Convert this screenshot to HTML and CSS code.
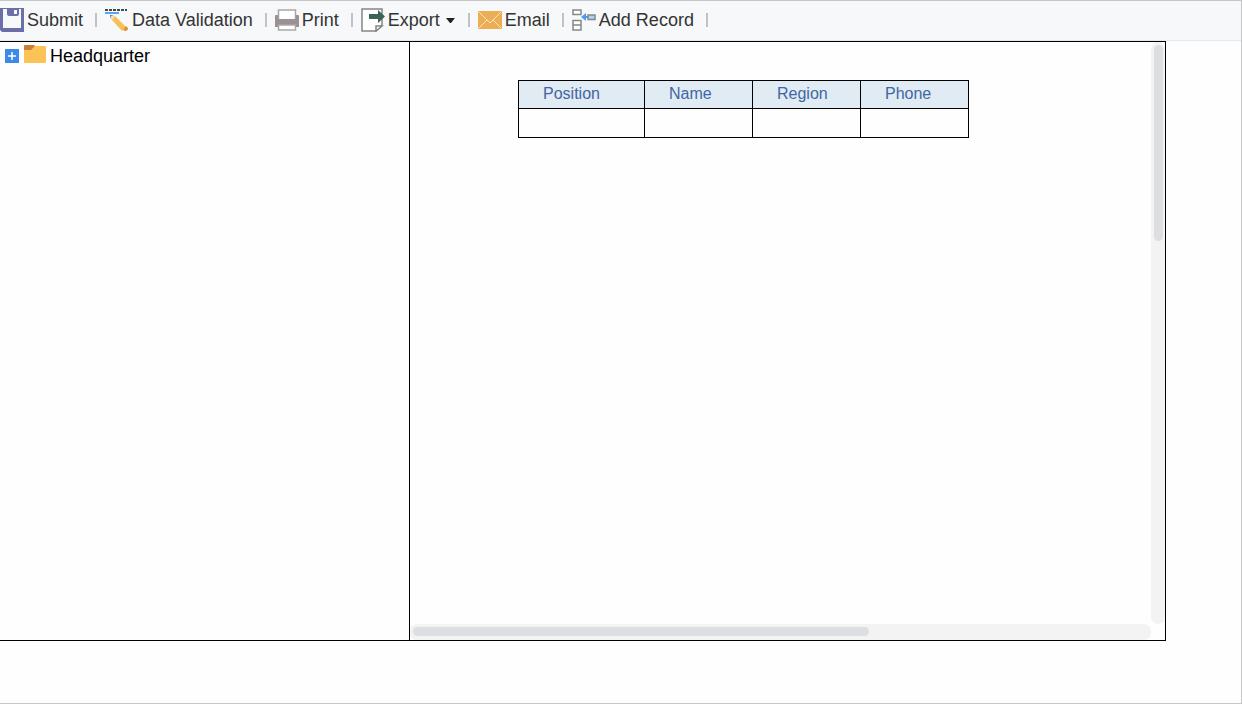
FILE: index.html
```html
<!DOCTYPE html>
<html lang="en">
    <head>
        <meta charset="UTF-8">
        <title>Headquarter</title>
        <link rel="stylesheet" href="styles.css">
    </head>
    <body>
        <div class="page">
            <div class="toolbar">
                <button type="button" class="tool">
                    <svg class="icon" viewBox="0 0 24 24">
                        <path fill="#6c6ea9" d="M0 0h24v24H2l-2-2z"/>
                        <path fill="#f6f8fa" d="M3 1h18v19H3z"/>
                        <path fill="#6c6ea9" d="M7 0h12v6q0 2-2 2H9q-2 0-2-2z"/>
                        <path fill="#f6f8fa" d="M14 2h3v4h-3z"/>
                    </svg>
                    Submit
                </button>
                <span class="separator"></span>
                <button type="button" class="tool">
                    <svg class="icon" viewBox="0 0 24 24">
                        <path stroke="#3f4a58" stroke-width="2" stroke-dasharray="3 1" d="M0 2h22"/>
                        <path stroke="#58a6ee" stroke-width="2" d="M0 5h14"/>
                        <path fill="#4a4a4a" d="M5 7l4 1-3 3z"/>
                        <path fill="#f5dfb8" d="M6 8l4 0-3 4-1-2z"/>
                        <path fill="#f8c054" d="M10 8l11 11-4 4L7 12z"/>
                        <path fill="#d98f3d" d="M21 18l2 2q0 3-3 3l-2-1z"/>
                    </svg>
                    Data Validation
                </button>
                <span class="separator"></span>
                <button type="button" class="tool">
                    <svg class="icon" viewBox="0 0 24 24">
                        <path fill="#fff" stroke="#aaa6a6" stroke-width="1.5" d="M3.500 2h17v10h-17z"/>
                        <path fill="#999193" d="M0 8q0-1 1-1h2v4h18V7h2q1 0 1 1v11H0z"/>
                        <path fill="#fff" stroke="#aaa6a6" stroke-width="1.500" d="M3.500 17h17v5h-17z"/>
                    </svg>
                    Print
                </button>
                <span class="separator"></span>
                <button type="button" class="tool">
                    <svg class="icon" viewBox="0 0 24 24">
                        <path fill="#fff" stroke="#858585" stroke-width="1.500" d="M1 1h20v16l-6 6H1z"/>
                        <path fill="#fff" stroke="#858585" stroke-width="1.500" d="M15 23v-5h6z"/>
                        <path fill="#3e6257" d="M8 6h9V2l7 6.500-7 6.500v-4H8z"/>
                    </svg>
                    Export
                    <svg class="caret" viewBox="0 0 10 5"><path fill="#222" d="M0 0h9L5 5H4z"/></svg>
                </button>
                <span class="separator"></span>
                <button type="button" class="tool">
                    <svg class="icon" viewBox="0 0 24 24">
                        <rect y="3" width="24" height="18" rx="1" fill="#ecae55"/>
                        <path fill="none" stroke="#fbe6c4" d="M1 4l11 11L23 4M1 20l8-8M23 20l-8-8"/>
                    </svg>
                    Email
                </button>
                <span class="separator"></span>
                <button type="button" class="tool">
                    <svg class="icon" viewBox="0 0 24 24">
                        <path fill="#fff" stroke="#878787" stroke-width="1.500" d="M1 2h8v4.500H1zM1 12.500h8V17H1zM1 17h8v5H1z"/>
                        <path fill="#4b9af5" d="M9 9l5-4v3h3v2h-3v3z"/>
                        <path fill="#a9d4f5" stroke="#878787" stroke-width="1.500" d="M16 7h7v4.500h-7z"/>
                    </svg>
                    Add Record
                </button>
                <span class="separator"></span>
            </div>

            <div class="workspace">
                <div class="tree">
                    <button type="button" class="expand" aria-label="Expand">
                        <svg class="plus" viewBox="0 0 14 14">
                            <rect width="14" height="14" fill="#3b8ae8"/>
                            <path stroke="#fff" stroke-width="1.500" d="M3 7h8M7 3v8"/>
                        </svg>
                    </button>
                    <svg class="folder" viewBox="0 0 22 18">
                        <path fill="#c78036" d="M0 1q0-1 1-1h9l2 2v3H0z"/>
                        <path fill="#fac355" d="M0 5h7l4-4h10q1 0 1 1v15q0 1-1 1H1q-1 0-1-1z"/>
                    </svg>
                    <span>Headquarter</span>
                </div>

                <div class="viewer">
                    <div class="report">
                        <table class="staff">
                            <thead>
                                <tr>
                                    <th class="position">Position</th>
                                    <th>Name</th>
                                    <th>Region</th>
                                    <th>Phone</th>
                                </tr>
                            </thead>
                            <tbody>
                                <tr>
                                    <td></td>
                                    <td></td>
                                    <td></td>
                                    <td></td>
                                </tr>
                            </tbody>
                        </table>
                    </div>
                    <div class="scrollbar"><div class="thumb-y"></div></div>
                    <div class="scrollbar"><div class="thumb-x"></div></div>
                </div>
            </div>
        </div>
    </body>
</html>
```

FILE: styles.css
```css
* {
    box-sizing: border-box;
}
body {
    margin: 0;
    font-family: "Liberation Sans", Arial, sans-serif;
    font-size: 18px;
    color: #000;
    background: #fefefe;
}
.page {
    display: flex;
    flex-direction: column;
    min-height: 100vh;
    border: 1px solid #c6c6c8;
    border-left: none;
}
.toolbar {
    display: flex;
    align-items: center;
    height: 40px;
    padding-bottom: 2px;
    background: #f6f8fa;
    border-bottom: 1px solid #e6e8eb;
}
.tool {
    display: flex;
    align-items: center;
    gap: 3px;
    padding: 0;
    border: none;
    background: none;
    font: inherit;
    line-height: 24px;
    color: #333;
    white-space: nowrap;
    cursor: pointer;
}
.icon {
    width: 24px;
    height: 24px;
    fill: none;
}
.caret {
    width: 10px;
    height: 5px;
    margin: 2px 0 0 3px;
}
.separator {
    width: 2px;
    height: 14px;
    margin: 0 8px 0 12px;
    background: #c1c2c9;
}
.workspace {
    display: flex;
    flex: 1;
    margin: 0 75px 62px 0;
    border: 1px solid #000;
    border-left: none;
}
.tree {
    display: flex;
    align-items: flex-start;
    width: 410px;
    padding: 3px 5px;
    border-right: 1px solid #000;
    line-height: 22px;
}
.expand {
    padding: 0;
    margin: 4px 5px 0 0;
    border: none;
    background: none;
    cursor: pointer;
}
.plus {
    display: block;
    width: 14px;
    height: 14px;
}
.folder {
    width: 22px;
    height: 18px;
    margin-right: 4px;
}
.viewer {
    flex: 1;
    display: grid;
    grid-template-columns: 1fr 14px;
    grid-template-rows: 1fr 16px;
}
.report {
    padding: 38px 108px;
}
.staff {
    table-layout: fixed;
    width: 451px;
    border-collapse: collapse;
    font-size: 16px;
    line-height: 18px;
}
.staff th,
.staff td {
    border: 1px solid #000;
    padding: 4px 24px;
    vertical-align: top;
}
.staff th {
    height: 28px;
    background: #e1ebf4;
    color: #3f66a3;
    font-weight: normal;
    text-align: left;
}
.staff td {
    height: 29px;
}
.staff .position {
    width: 126px;
}
.scrollbar {
    padding: 3px;
    border-radius: 7px;
    background: #f3f3f3;
}
.thumb-x,
.thumb-y {
    height: 9px;
    border-radius: 5px;
    background: #dddee2;
}
.thumb-x {
    width: 62%;
}
.thumb-y {
    width: 9px;
    height: 34%;
}
```
